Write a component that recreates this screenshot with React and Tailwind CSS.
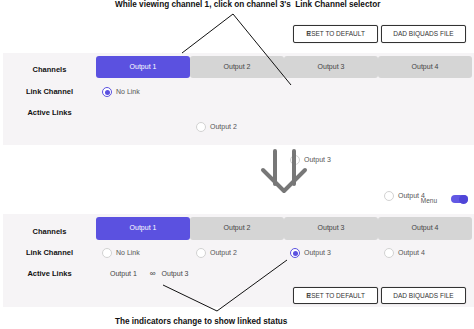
import React from "react";

function Radio({ checked, label, className = "" }) {
  return (
    <div className={"flex items-center gap-[4px] h-[14px] pl-[6px] " + className}>
      {checked ? (
        <span className="w-[10px] h-[10px] rounded-full border-[1.5px] border-[#5b51e0] bg-white flex items-center justify-center shrink-0">
          <span className="w-[5px] h-[5px] rounded-full bg-[#5b51e0]" />
        </span>
      ) : (
        <span className="w-[10px] h-[10px] rounded-full border border-[#d2d2d2] bg-white shrink-0" />
      )}
      <span className="text-[7px] leading-[10px] text-[#555] whitespace-nowrap">{label}</span>
    </div>
  );
}

function Tabs({ h }) {
  const names = ["Output 1", "Output 2", "Output 3", "Output 4"];
  return (
    <div className="flex">
      {names.map((n, i) => (
        <div
          key={n}
          className={
            (h === 22 ? "h-[22px] " : "h-[23px] ") +
            "w-[94px] rounded-[3px] flex items-center justify-center text-[7px] " +
            (i === 0 ? "bg-[#5b51e0] text-white" : "bg-[#d5d5d5] text-[#444]")
          }
        >
          {n}
        </div>
      ))}
    </div>
  );
}

function Buttons({ tall }) {
  const cls =
    (tall ? "h-[18px] " : "h-[17px] ") +
    "rounded-[2px] border border-[#333] bg-white flex items-center justify-center text-[6.5px] text-[#333] shadow-[0_0_1px_rgba(0,0,0,0.4)]";
  return (
    <div className="flex justify-end gap-[3px] pr-[8px]">
      <div className={cls + " w-[85px]"}>
        <span>R</span>
        <span className="ml-[-4px]">E</span>
        <span>SET TO DEFAULT</span>
      </div>
      <div className={cls + " w-[85px]"}>DAD BIQUADS FILE</div>
    </div>
  );
}

function Label({ children, className = "" }) {
  return (
    <div className={"w-[93px] shrink-0 text-center text-[7.5px] font-bold text-[#111] " + className}>
      {children}
    </div>
  );
}

export default function App() {
  return (
    <div
      className="relative w-[474px] h-[329px] bg-white overflow-hidden"
      style={{ fontFamily: '"Liberation Sans", Arial, sans-serif' }}
    >
      {/* top annotation */}
      <div className="h-[9px] leading-[9px] text-[8.2px] font-bold text-[#111] pl-[115px] whitespace-pre">
        {"While viewing channel 1, click on channel 3's  Link Channel selector"}
      </div>

      <div className="mt-[16px]">
        <Buttons tall />
      </div>

      {/* top panel */}
      <div className="ml-[3px] mt-[10px] h-[92px] bg-[#f6f4f6] flex flex-col">
        <div className="flex mt-[3px] h-[22px]">
          <Label className="pt-[9px] leading-[10px]">Channels</Label>
          <Tabs h={22} />
        </div>
        <div className="flex mt-[7px] h-[14px] items-start">
          <Label className="leading-[14px]">Link Channel</Label>
          <div className="w-[94px] shrink-0">
            <Radio checked label="No Link" />
          </div>
          <div className="w-[94px] shrink-0 mt-[35px]">
            <Radio label="Output 2" />
          </div>
          <div className="w-[94px] shrink-0 mt-[68px]">
            <Radio label="Output 3" className="pl-[5px]" />
          </div>
          <div className="w-[94px] shrink-0 mt-[104px]">
            <Radio label="Output 4" className="pl-[5px]" />
          </div>
        </div>
        <div className="flex mt-[7px] h-[14px]">
          <Label className="leading-[14px]">Active Links</Label>
        </div>
      </div>

      {/* middle */}
      <div className="h-[69px] flex flex-col">
        <svg className="ml-[258px] mt-[3px]" width="52" height="46" viewBox="0 0 52 46">
          <g stroke="#777" strokeWidth="4" strokeLinecap="round" strokeLinejoin="round" fill="none">
            <line x1="17" y1="3" x2="17" y2="36" />
            <line x1="36" y1="3" x2="36" y2="36" />
            <polyline points="5,22 26,43 47,22" />
          </g>
        </svg>
        <div className="flex justify-end items-center h-[10px] pr-[6px]">
          <span className="text-[6.5px] leading-[8px] text-[#555] mt-[3px]">Menu</span>
          <div className="ml-[14px] w-[17px] h-[8px] rounded-full bg-[#6258e4] flex items-center justify-end">
            <span className="w-[9px] h-[9px] rounded-full bg-[#4f45d8]" />
          </div>
        </div>
      </div>

      {/* bottom panel */}
      <div className="ml-[3px] h-[93px] bg-[#f6f4f6] flex flex-col">
        <div className="flex mt-[3px] h-[23px]">
          <Label className="pt-[10px] leading-[10px]">Channels</Label>
          <Tabs h={23} />
        </div>
        <div className="flex mt-[6px] h-[14px]">
          <Label className="leading-[14px]">Link Channel</Label>
          <div className="w-[94px] shrink-0">
            <Radio label="No Link" />
          </div>
          <div className="w-[94px] shrink-0">
            <Radio label="Output 2" />
          </div>
          <div className="w-[94px] shrink-0">
            <Radio checked label="Output 3" />
          </div>
          <div className="w-[94px] shrink-0">
            <Radio label="Output 4" />
          </div>
        </div>
        <div className="flex mt-[7px] h-[14px] items-center">
          <Label className="leading-[14px]">Active Links</Label>
          <div className="flex items-center pl-[14px] text-[7px] text-[#444]">
            <span>Output 1</span>
            <span className="ml-[13px] text-[8px] leading-[8px] text-[#333]">∞</span>
            <span className="ml-[6px]">Output 3</span>
          </div>
        </div>
        <div className="mt-[6px]">
          <Buttons />
        </div>
      </div>

      {/* bottom annotation */}
      <div className="mt-[10px] h-[9px] leading-[9px] text-[8.2px] font-bold text-[#111] pl-[115px] whitespace-nowrap">
        The indicators change to show linked status
      </div>

      {/* annotation lines */}
      <svg className="absolute inset-0 pointer-events-none" width="474" height="329" viewBox="0 0 474 329">
        <polyline points="182,53 233,14 291,85" stroke="#111" strokeWidth="1" fill="none" />
        <polyline points="163,285 217,311 287,260" stroke="#111" strokeWidth="1" fill="none" />
      </svg>
    </div>
  );
}
